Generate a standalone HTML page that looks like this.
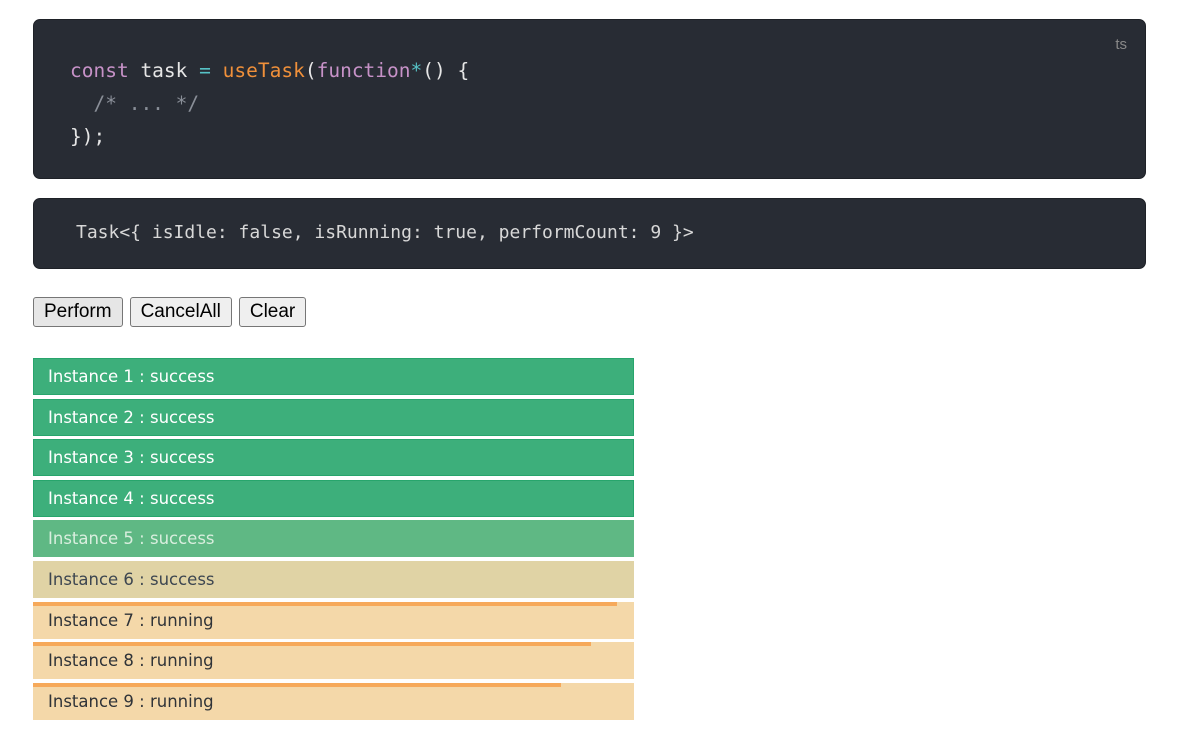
<!DOCTYPE html>
<html><head><style>
body{margin:0;background:#fff;width:1200px;height:738px;overflow:hidden;font-family:"Liberation Sans",sans-serif}
.code{position:absolute;left:33px;width:1111px;background:#282c34;border:1px solid #1e2127;border-radius:7px;font-family:"DejaVu Sans Mono","Liberation Mono",monospace;color:#e6e6e6}
#c1{top:19px;height:158px}
#c2{top:198px;height:69px}
pre{margin:0;font-family:inherit}
#c1 pre{position:absolute;left:36px;top:34px;font-size:19.5px;line-height:33px}
#c2 pre{position:absolute;left:42px;top:22px;font-size:18px;line-height:24px;color:#d8d8d8}
.ts{position:absolute;right:18px;top:16px;font-size:15px;color:#888;font-family:"Liberation Sans",sans-serif}
.k{color:#c792c8}.f{color:#f0903a}.o{color:#56c2c6}.c{color:#8a8f98}
.btns{position:absolute;top:297px;left:33px;display:flex;gap:7px}
.btn{height:28px;border:1px solid #767676;border-radius:3px;background:#efefef;font-size:19px;padding:0 10px;line-height:28px;color:#000}
.rows{position:absolute;top:358px;left:33px;width:601px}
.row{position:relative;height:36px;margin-bottom:4.6px;border:1px solid;box-sizing:content-box;font-family:"DejaVu Sans","Liberation Sans",sans-serif;font-size:16.5px;line-height:36px;padding-left:14px;box-sizing:border-box;height:37px;margin-bottom:3.6px}
.g{background:#3daf7b;border-color:#27a56c;color:#fff}
.g5{background:#5fb884;border-color:#5fb884;color:#d9eede}
.y6{background:#e0d3a5;border-color:#e0d3a5;color:#3d4650}
.r{background:#f4d8a9;border-color:#f4d8a9;color:#2f3338}
.bar{position:absolute;left:-1px;top:-1px;height:4px;background:#f6a95a}
</style></head><body>
<div class="code" id="c1"><span class="ts">ts</span><pre><span class="k">const</span> task <span class="o">=</span> <span class="f">useTask</span>(<span class="k">function</span><span class="o">*</span>() {
  <span class="c">/* ... */</span>
});</pre></div>
<div class="code" id="c2"><pre>Task&lt;{ isIdle: false, isRunning: true, performCount: 9 }&gt;</pre></div>
<div class="btns"><div class="btn" style="background:#e6e6e6">Perform</div><div class="btn">CancelAll</div><div class="btn">Clear</div></div>
<div class="rows">
<div class="row g">Instance 1 : success</div>
<div class="row g">Instance 2 : success</div>
<div class="row g">Instance 3 : success</div>
<div class="row g">Instance 4 : success</div>
<div class="row g5">Instance 5 : success</div>
<div class="row y6">Instance 6 : success</div>
<div class="row r"><div class="bar" style="width:584px"></div>Instance 7 : running</div>
<div class="row r"><div class="bar" style="width:558px"></div>Instance 8 : running</div>
<div class="row r"><div class="bar" style="width:528px"></div>Instance 9 : running</div>
</div>
</body></html>
